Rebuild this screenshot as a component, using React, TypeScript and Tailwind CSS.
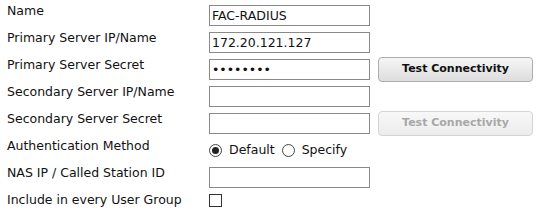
const font = "font-['DejaVu_Sans',sans-serif]";

function TextBox({ value, password }: { value?: string; password?: boolean }) {
  return (
    <input
      readOnly
      type={password ? "password" : "text"}
      value={value ?? ""}
      className="w-[161px] h-[21px] border border-[#8a8a8a] bg-white px-[2px] text-[12.5px] text-[#111] outline-none"
    />
  );
}

function TestButton({ disabled }: { disabled?: boolean }) {
  return (
    <button
      disabled={disabled}
      className={
        disabled
          ? "ml-[8px] w-[155px] h-[25px] rounded-[4px] border border-[#d4d4d4] bg-gradient-to-b from-[#f8f8f8] to-[#ececec] text-[11px] font-bold text-[#a8a8a8]"
          : "ml-[8px] w-[155px] h-[25px] rounded-[4px] border border-[#adadad] bg-gradient-to-b from-[#f6f6f6] to-[#dddddd] text-[11px] font-bold text-[#111]"
      }
    >
      Test Connectivity
    </button>
  );
}

function Radio({ checked, label }: { checked?: boolean; label: string }) {
  return (
    <label className="flex items-center gap-[7px]">
      <span className="flex w-[13px] h-[13px] items-center justify-center rounded-full border border-[#444] bg-white">
        {checked && <span className="w-[7px] h-[7px] rounded-full bg-[#222]" />}
      </span>
      <span>{label}</span>
    </label>
  );
}

function Row({ label, children, last }: { label: string; children: React.ReactNode; last?: boolean }) {
  return (
    <div className={last ? "flex h-[16px] items-center" : "flex h-[25px] items-center"}>
      <div className="w-[202px] self-start leading-[16px]">{label}</div>
      <div className="flex items-center">{children}</div>
    </div>
  );
}

export default function App() {
  return (
    <div className={`${font} w-[542px] h-[217px] bg-white text-[12.5px] text-[#111] pl-[7px] pt-[3px] flex flex-col gap-[2px]`}>
      <Row label="Name">
        <TextBox value="FAC-RADIUS" />
      </Row>
      <Row label="Primary Server IP/Name">
        <TextBox value="172.20.121.127" />
      </Row>
      <Row label="Primary Server Secret">
        <TextBox value="secret12" password />
        <TestButton />
      </Row>
      <Row label="Secondary Server IP/Name">
        <TextBox />
      </Row>
      <Row label="Secondary Server Secret">
        <TextBox password />
        <TestButton disabled />
      </Row>
      <Row label="Authentication Method">
        <div className="flex items-center gap-[7px]">
          <Radio checked label="Default" />
          <Radio label="Specify" />
        </div>
      </Row>
      <Row label="NAS IP / Called Station ID">
        <TextBox />
      </Row>
      <Row label="Include in every User Group" last>
        <span className="w-[13px] h-[13px] border border-[#333] bg-white" />
      </Row>
    </div>
  );
}
